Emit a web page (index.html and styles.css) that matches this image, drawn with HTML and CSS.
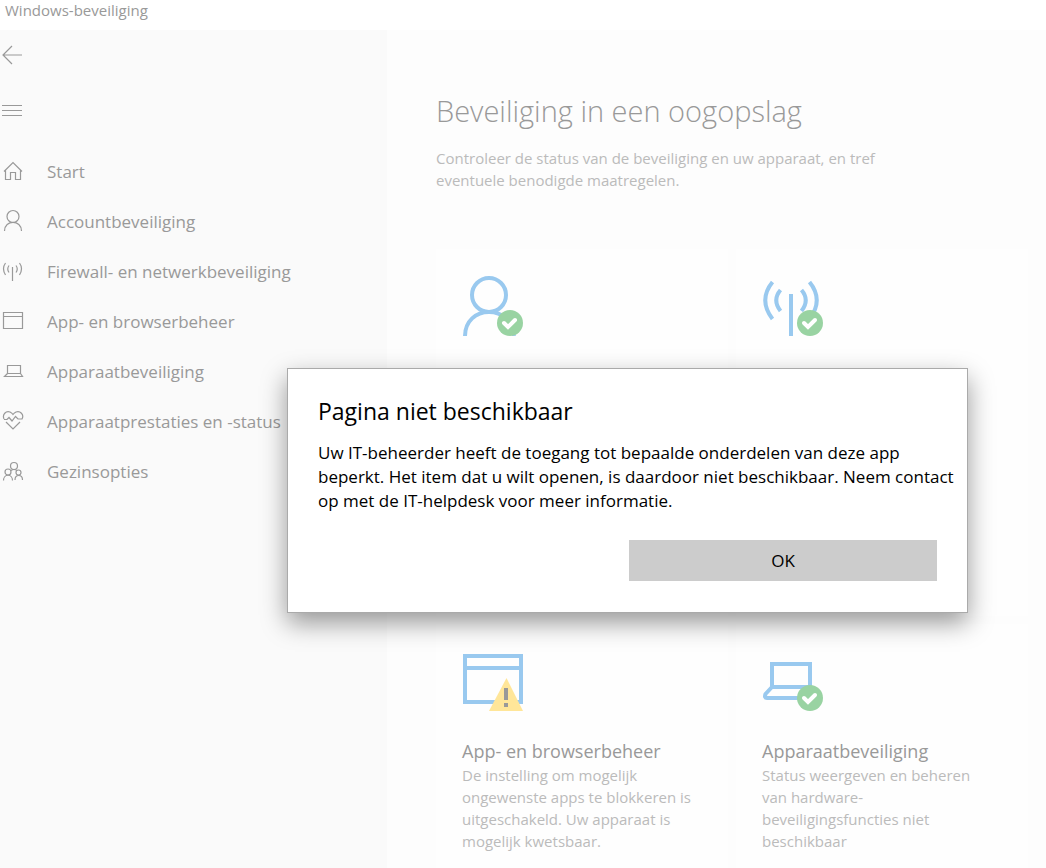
FILE: index.html
```html
<!DOCTYPE html>
<html lang="nl">

<head>
    <meta charset="UTF-8">
    <meta name="viewport" content="width=device-width, initial-scale=1.0">
    <title>Windows-beveiliging</title>
    <link rel="stylesheet" href="styles.css">
</head>

<body>
    <div class="app">
        <header class="titlebar">Windows-beveiliging</header>

        <div class="content">
            <aside class="sidebar">
                <button type="button" class="icon-btn" aria-label="Terug">
                    <svg width="22" height="20" viewBox="0 0 22 20">
                        <path d="M22 10H3M12 1L3 10L12 19" />
                    </svg>
                </button>
                <button type="button" class="icon-btn" aria-label="Menu">
                    <svg width="22" height="20" viewBox="0 0 22 20">
                        <path d="M2 5.5H22M2 10.5H22M2 15.5H22" />
                    </svg>
                </button>

                <nav class="nav">
                    <a href="#start">
                        <svg viewBox="0 0 24 24">
                            <path d="M4 12.5L13 3.5L22 12.5M5.500 11.500V20.500H10.500V13.500H15.500V20.500H20.500V11.500" />
                        </svg>
                        Start
                    </a>
                    <a href="#account">
                        <svg viewBox="0 0 24 24">
                            <circle cx="13" cy="7.500" r="6" />
                            <path d="M4.500 22C4.500 10.500 21.500 10.500 21.500 22" />
                        </svg>
                        Accountbeveiliging
                    </a>
                    <a href="#firewall">
                        <svg viewBox="0 0 24 24">
                            <path d="M12.500 8V22M5.500 4Q1.500 9.500 5.500 16M9 6.500Q6.500 10 9 13.500M19.500 4Q23.500 9.500 19.500 16M16 6.500Q18.500 10 16 13.500" />
                        </svg>
                        Firewall- en netwerkbeveiliging
                    </a>
                    <a href="#browser">
                        <svg viewBox="0 0 24 24">
                            <path d="M3.500 3.500H22.500V19.500H3.500ZM3.500 7.500H22.500" />
                        </svg>
                        App- en browserbeheer
                    </a>
                    <a href="#apparaat">
                        <svg viewBox="0 0 24 24">
                            <path d="M7.500 6.500H20.500V14.500H7.500ZM7.500 14.500L4.500 17.500H22.500L20.500 14.500" />
                        </svg>
                        Apparaatbeveiliging
                    </a>
                    <a href="#prestaties">
                        <svg viewBox="0 0 24 24">
                            <path d="M4 10C2 5.500 6 1.500 10 3Q12 4 13 5.500Q14 4 16 3C20 1.500 24.500 5.500 22 10H18L15.500 7.500L12 12L9 8.500L7 10.500H4M6 13L13 20L20 13" />
                        </svg>
                        Apparaatprestaties en -status
                    </a>
                    <a href="#gezin">
                        <svg viewBox="0 0 24 24">
                            <circle cx="14" cy="7" r="3.500" />
                            <circle cx="8" cy="13" r="3" />
                            <circle cx="18.500" cy="13.500" r="2.500" />
                            <path d="M3.500 21.500C3.500 14.500 12.500 14.500 12.500 21.500M15 21C15 15 22.500 15 22.500 21M11 11.500Q14 9.500 17 11.500" />
                        </svg>
                        Gezinsopties
                    </a>
                </nav>
            </aside>

            <main class="main">
                <h1>Beveiliging in een oogopslag</h1>
                <p class="intro">Controleer de status van de beveiliging en uw apparaat, en tref eventuele benodigde maatregelen.</p>

                <div class="cards">
                    <section class="card">
                        <svg class="card-icon" viewBox="0 0 60 60" role="img" aria-label="Accountbeveiliging">
                            <circle cx="26" cy="19" r="17" />
                            <path d="M2 60C2 45 13 36 26 36S50 45 51 60" />
                            <circle class="badge" cx="47" cy="47" r="13" />
                            <path class="check" d="M41 47L45 51L52 44" />
                        </svg>
                    </section>
                    <section class="card">
                        <svg class="card-icon" viewBox="0 0 60 60" role="img" aria-label="Firewall">
                            <path d="M28 18V60M9.500 6Q-5 24 9.500 43M17.500 14Q9 24 17.500 35M46.500 6Q61 24 46.500 43M38.500 14Q47 24 38.500 35" />
                            <circle class="badge" cx="47" cy="47" r="13" />
                            <path class="check" d="M41 47L45 51L52 44" />
                        </svg>
                    </section>
                    <section class="card">
                        <svg class="card-icon" viewBox="0 0 60 60" role="img" aria-label="Waarschuwing">
                            <path d="M2 5H58V51H2ZM2 17H58" />
                            <path class="warning" d="M43.500 27L60 60H26Z" />
                            <path class="mark" d="M43 37V49M43 52V56" />
                        </svg>
                        <h2>App- en browserbeheer</h2>
                        <p>De instelling om mogelijk ongewenste apps te blokkeren is uitgeschakeld. Uw apparaat is mogelijk kwetsbaar.</p>
                    </section>
                    <section class="card">
                        <svg class="card-icon" viewBox="0 0 60 60" role="img" aria-label="In orde">
                            <path d="M9 13H47V36H9ZM9 36L2.500 43Q1 47 4 47H45" />
                            <circle class="badge" cx="47" cy="47" r="13" />
                            <path class="check" d="M41 47L45 51L52 44" />
                        </svg>
                        <h2>Apparaatbeveiliging</h2>
                        <p>Status weergeven en beheren van hardware-beveiligingsfuncties niet beschikbaar</p>
                    </section>
                </div>
            </main>
        </div>

        <dialog class="dialog" open aria-labelledby="dialogTitle">
            <h2 id="dialogTitle">Pagina niet beschikbaar</h2>
            <p>Uw IT-beheerder heeft de toegang tot bepaalde onderdelen van deze app<br>beperkt. Het item dat u wilt openen, is daardoor niet beschikbaar. Neem contact<br>op met de IT-helpdesk voor meer informatie.</p>
            <button type="button" class="ok-btn" id="okButton">OK</button>
        </dialog>
    </div>

    <script>
        document.getElementById('okButton').addEventListener('click', function () {
            document.querySelector('.dialog').close();
        });
    </script>
</body>

</html>
```
FILE: styles.css
```css
* {
    margin: 0;
    padding: 0;
    box-sizing: border-box;
    font-family: 'Segoe UI', 'Open Sans', 'Noto Sans', sans-serif;
}

body {
    background-color: #fff;
    color: #999;
}

.app {
    position: relative;
    display: flex;
    flex-direction: column;
    height: 100vh;
    overflow: hidden;
}

.titlebar {
    flex: none;
    height: 30px;
    padding-left: 5px;
    font-size: 15px;
    line-height: 20px;
}

.content {
    display: flex;
    flex: 1;
    min-height: 0;
}

.sidebar {
    flex: none;
    width: 387px;
    padding-top: 15px;
    background-color: #fafafa;
}

.icon-btn {
    display: block;
    height: 20px;
    margin-bottom: 35px;
    border: none;
    background: none;
    cursor: pointer;
}

.icon-btn svg {
    display: block;
}

.sidebar svg {
    fill: none;
    stroke: #999;
    stroke-width: 1.2;
}

.nav {
    display: flex;
    flex-direction: column;
    margin-top: -9px;
}

.nav a {
    display: flex;
    align-items: center;
    gap: 23px;
    height: 50px;
    color: #999;
    font-size: 17px;
    text-decoration: none;
}

.nav svg {
    width: 24px;
    height: 24px;
}

.main {
    flex: 1;
    min-width: 0;
    padding: 59px 18px 0 49px;
    background-color: #fdfdfd;
    overflow: hidden;
}

.main h1 {
    font-size: 29px;
    font-weight: 300;
    line-height: 44px;
}

.intro {
    max-width: 480px;
    margin-top: 14px;
    color: #bbb;
    font-size: 15px;
    line-height: 22px;
}

.cards {
    display: grid;
    grid-template-columns: 1fr 1fr;
    grid-auto-rows: 367px;
    gap: 8px;
    margin-top: 58px;
}

.card {
    padding: 27px 26px;
    background-color: #fefefe;
}

.card-icon {
    display: block;
    width: 60px;
    height: 60px;
    margin-left: 1px;
    fill: none;
    stroke: #99c9ef;
    stroke-width: 4;
}

.card-icon .badge {
    fill: #99d3a2;
    stroke: none;
}

.card-icon .check {
    stroke: #fff;
    stroke-linecap: round;
}

.card-icon .warning {
    fill: #ffe699;
    stroke: none;
}

.card-icon .mark {
    stroke: #999;
}

.card h2 {
    margin-top: 27px;
    font-size: 18px;
    font-weight: 400;
    line-height: 26px;
}

.card p {
    max-width: 234px;
    color: #bbb;
    font-size: 15px;
    line-height: 22px;
}

.dialog {
    position: absolute;
    top: 368px;
    left: 287px;
    width: 681px;
    max-width: 90%;
    padding: 26px 30px 31px;
    border: 1px solid #aaa;
    background-color: #fff;
    color: #000;
    box-shadow: 0 10px 24px rgba(0, 0, 0, 0.4);
}

.dialog h2 {
    font-size: 23px;
    font-weight: 400;
    line-height: 32px;
}

.dialog p {
    margin-top: 14px;
    margin-right: -20px;
    font-size: 17px;
    line-height: 24px;
}

.ok-btn {
    display: block;
    width: 308px;
    height: 41px;
    margin-top: 27px;
    margin-left: auto;
    border: none;
    background-color: #ccc;
    color: #000;
    font-size: 17px;
    cursor: pointer;
}

.ok-btn:hover {
    background-color: #bbb;
}
```
